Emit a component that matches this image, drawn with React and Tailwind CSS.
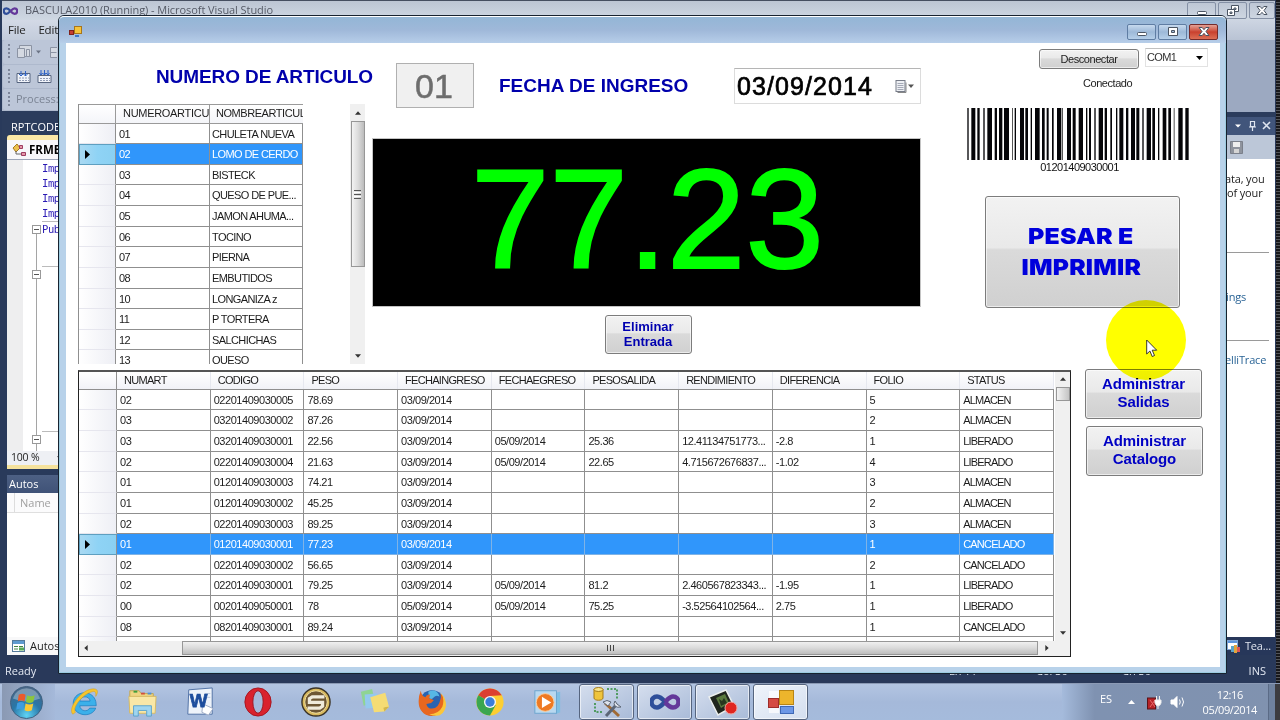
import React from 'react';
import clsx from 'clsx';

const articulos = [
    ['01', 'CHULETA NUEVA'],
    ['02', 'LOMO DE CERDO'],
    ['03', 'BISTECK'],
    ['04', 'QUESO DE PUE...'],
    ['05', 'JAMON AHUMA...'],
    ['06', 'TOCINO'],
    ['07', 'PIERNA'],
    ['08', 'EMBUTIDOS'],
    ['10', 'LONGANIZA z'],
    ['11', 'P TORTERA'],
    ['12', 'SALCHICHAS'],
    ['13', 'QUESO'],
];

const columnas = ['NUMART', 'CODIGO', 'PESO', 'FECHAINGRESO', 'FECHAEGRESO', 'PESOSALIDA', 'RENDIMIENTO', 'DIFERENCIA', 'FOLIO', 'STATUS'];

const entradas = [
    ['02', '02201409030005', '78.69', '03/09/2014', '', '', '', '', '5', 'ALMACEN'],
    ['03', '03201409030002', '87.26', '03/09/2014', '', '', '', '', '2', 'ALMACEN'],
    ['03', '03201409030001', '22.56', '03/09/2014', '05/09/2014', '25.36', '12.41134751773...', '-2.8', '1', 'LIBERADO'],
    ['02', '02201409030004', '21.63', '03/09/2014', '05/09/2014', '22.65', '4.715672676837...', '-1.02', '4', 'LIBERADO'],
    ['01', '01201409030003', '74.21', '03/09/2014', '', '', '', '', '3', 'ALMACEN'],
    ['01', '01201409030002', '45.25', '03/09/2014', '', '', '', '', '2', 'ALMACEN'],
    ['02', '02201409030003', '89.25', '03/09/2014', '', '', '', '', '3', 'ALMACEN'],
    ['01', '01201409030001', '77.23', '03/09/2014', '', '', '', '', '1', 'CANCELADO'],
    ['02', '02201409030002', '56.65', '03/09/2014', '', '', '', '', '2', 'CANCELADO'],
    ['02', '02201409030001', '79.25', '03/09/2014', '05/09/2014', '81.2', '2.460567823343...', '-1.95', '1', 'LIBERADO'],
    ['00', '00201409050001', '78', '05/09/2014', '05/09/2014', '75.25', '-3.52564102564...', '2.75', '1', 'LIBERADO'],
    ['08', '08201409030001', '89.24', '03/09/2014', '', '', '', '', '1', 'CANCELADO'],
    ['', '', '', '', '', '', '', '', '', ''],
];

// start and width of each bar, in thirds of a pixel
const barras = [
    [1, 4], [13, 12], [31, 7], [49, 4], [61, 14], [83, 7], [96, 10], [111, 15], [135, 3], [143, 4],
    [159, 12], [175, 8], [191, 4], [204, 14], [225, 8], [239, 6], [255, 5], [270, 13], [285, 3], [300, 12],
    [317, 9], [335, 13], [357, 4], [366, 6], [382, 4], [395, 13], [413, 7], [430, 5], [447, 4], [457, 12],
    [477, 7], [492, 12], [508, 9], [526, 4], [539, 13], [556, 8], [573, 4], [587, 11], [604, 8], [620, 3],
    [634, 13], [655, 10],
];

const flecha = {
    up: 'M0 4L3.5 0L7 4Z',
    down: 'M0 0L3.5 4L7 0Z',
    left: 'M4 0L0 3.5L4 7Z',
    right: 'M0 0L4 3.5L0 7Z',
};

function Arrow({ dir, className }) {
    return (
        <svg viewBox={dir === 'up' || dir === 'down' ? '0 0 7 4' : '0 0 4 7'} className={clsx('shrink-0', className)}>
            <path d={flecha[dir]} fill="#333" />
        </svg>
    );
}

function RowHead({ selected, className }) {
    return (
        <div className={clsx('shrink-0 flex items-center pl-[5px] border-r border-r-[#8f8f8f]', className,
            selected
                ? 'bg-linear-to-r from-[#a9d9f2] via-[#8fd3f5] to-[#8ad0f2] border border-[#5e9fc0]'
                : 'bg-linear-to-r from-white to-[#eeeff5] border-b border-b-[#e6e6ee]')}>
            {selected && <svg viewBox="0 0 5 9" className="w-[5px] h-[9px]"><path d="M0 0L5 4.5L0 9Z" fill="#000" /></svg>}
        </div>
    );
}

function WinButton({ className, children }) {
    return (
        <button className={clsx('flex flex-col items-center justify-center rounded-[3px] border border-[#7c7c7c] bg-[linear-gradient(#f2f2f2,#e9e9e9_46%,#dadada_48%,#d0d0d0)] shadow-[inset_0_0_0_1px_rgba(255,255,255,.6)] whitespace-nowrap', className)}>
            {children}
        </button>
    );
}

function CaptionButton({ kind, className }) {
    return (
        <div className={clsx('flex items-center justify-center rounded-[2px] border', className)}>
            <svg viewBox="0 0 14 12" className="w-[14px] h-[12px]" fill="#fff" stroke="#4b5563" strokeWidth="1">
                {kind === 'min' && <rect x="2.5" y="6.5" width="9" height="3" rx="1" />}
                {kind === 'max' && <path fillRule="evenodd" d="M2.5 1.5h9v8h-9zM5.5 4.5v2h3v-2z" />}
                {kind === 'restore' && <><path fillRule="evenodd" d="M5.5 .5h7v6h-7zM8 3v1.500h2V3z" /><path fillRule="evenodd" d="M1.500 4.500h7v6h-7zM4 7v1.500h2V7z" /></>}
                {kind === 'close' && <path d="M2 1.500h3.200L7 3.700l1.800-2.200H12L9 5.500l3 4H8.800L7 7.300 5.200 9.500H2l3-4z" />}
            </svg>
        </div>
    );
}

function ArticulosGrid() {
    return (
        <div className="flex h-[260px] w-[287px] text-[11px] tracking-[-0.600px] text-[#1c1c1c] overflow-hidden whitespace-nowrap">
            <div className="w-[225px] border-l border-[#8f8f8f] overflow-hidden">
                <div className="flex h-[19.500px] border-t border-b border-[#9a9a9a] bg-linear-to-b from-white to-[#f4f5f9]">
                    <div className="w-[37px] border-r border-[#9a9a9a] shrink-0" />
                    <div className="w-[94px] shrink-0 border-r border-[#9a9a9a] pl-[7px] leading-[17px] overflow-hidden tracking-[-0.300px]">NUMEROARTICULO</div>
                    <div className="grow pl-[6px] leading-[17px] overflow-hidden tracking-[-0.450px]">NOMBREARTICULO</div>
                </div>
                {articulos.map(([num, nombre], i) => (
                    <div key={num} className="flex h-[20.630px]">
                        <RowHead selected={i === 1} className="w-[37px]" />
                        <div className={clsx('w-[94px] shrink-0 border-r border-b border-[#8f8f8f] pl-[3px] leading-[20px]', i === 1 && 'bg-[#3096fb] text-white')}>{num}</div>
                        <div className={clsx('grow border-r border-b border-[#8f8f8f] pl-[2px] leading-[20px]', i === 1 && 'bg-[#3096fb] text-white')}>{nombre}</div>
                    </div>
                ))}
            </div>
            <div className="ml-auto flex w-[15px] flex-col items-center bg-[#f0f0f0]">
                <div className="flex h-[17px] items-center"><Arrow dir="up" className="w-[6px] h-[4px]" /></div>
                <div className="flex w-[14px] h-[146px] flex-col items-center justify-center gap-px border border-[#979797] bg-linear-to-r from-[#f3f3f3] via-[#dcdcdc] to-[#bcbcbc]">
                    <i className="h-px w-[7px] bg-[#555]" />
                    <i className="h-px w-[7px] bg-white" />
                    <i className="h-px w-[7px] bg-[#555]" />
                    <i className="h-px w-[7px] bg-white" />
                    <i className="h-px w-[7px] bg-[#555]" />
                </div>
                <div className="mt-auto flex h-[16px] items-center"><Arrow dir="down" className="w-[6px] h-[4px]" /></div>
            </div>
        </div>
    );
}

function EntradasGrid() {
    return (
        <div className="flex h-[287px] w-[993px] shrink-0 flex-col border border-[#222] border-t-2 border-t-[#555] text-[11px] tracking-[-0.45px] text-[#1c1c1c] whitespace-nowrap">
            <div className="flex h-[269px]">
                <div className="w-[976px] overflow-hidden">
                    <div className="flex h-[18.200px] w-[975px] border-b border-[#8f8f8f] bg-linear-to-b from-white to-[#f1f2f7]">
                        <div className="w-[38px] shrink-0 border-r border-[#8f8f8f]" />
                        {columnas.map((c) => (
                            <div key={c} className="w-[93.700px] shrink-0 border-r border-[#e6e8ef] pl-[7px] leading-[17px] tracking-[-0.700px]">{c}</div>
                        ))}
                    </div>
                    {entradas.map((fila, i) => (
                        <div key={i} className="flex h-[20.650px] w-[975px]">
                            <RowHead selected={i === 7} className="w-[38px]" />
                            {fila.map((v, j) => (
                                <div key={j} className={clsx('w-[93.700px] shrink-0 border-r border-b pl-[3px] leading-[20px]', j === 9 && 'tracking-[-0.800px]', i === 7 ? 'bg-[#3096fb] text-white border-[#7fb3e6]' : 'border-[#8f8f8f]')}>{v}</div>
                            ))}
                        </div>
                    ))}
                </div>
                <div className="flex w-[15px] flex-col items-center bg-[#f0f0f0]">
                    <div className="flex h-[15px] items-center"><Arrow dir="up" className="w-[6px] h-[4px]" /></div>
                    <div className="w-[14px] h-[14px] border border-[#979797] bg-linear-to-r from-[#f3f3f3] to-[#c4c4c4]" />
                    <div className="mt-auto flex h-[15px] items-center"><Arrow dir="down" className="w-[6px] h-[4px]" /></div>
                </div>
            </div>
            <div className="flex grow items-center bg-[#f0f0f0]">
                <div className="flex w-[103px] pl-[5px]"><Arrow dir="left" className="w-[4px] h-[6px]" /></div>
                <div className="flex h-[14px] w-[856px] items-center justify-center gap-[2px] border border-[#979797] bg-linear-to-b from-[#f0f0f0] via-[#dadada] to-[#bdbdbd]">
                    <i className="h-[6px] w-px bg-[#444]" />
                    <i className="h-[6px] w-px bg-[#444]" />
                    <i className="h-[6px] w-px bg-[#444]" />
                </div>
                <Arrow dir="right" className="ml-[7px] w-[4px] h-[6px]" />
            </div>
        </div>
    );
}

function FormIcon({ className }) {
    return (
        <svg viewBox="0 0 26 24" className={className}>
            <rect x="1" y="1" width="10" height="22" fill="#fff" opacity=".7" />
            <rect x="11.500" y=".5" width="14" height="14" fill="#edb52c" stroke="#b98514" />
            <rect x=".5" y="8.500" width="10" height="9" fill="#d44a42" stroke="#9d2d2a" />
            <rect x="12.500" y="16.500" width="13" height="7" fill="#6c97e6" stroke="#3f68b5" />
        </svg>
    );
}

function TitleIcon({ className }) {
    return (
        <svg viewBox="0 0 13 12" className={className}>
            <rect x="5.500" y=".5" width="7" height="7" fill="#f6c43a" stroke="#a8761a" />
            <rect x=".5" y="4.500" width="4" height="4" fill="#c43d30" stroke="#7f211c" />
            <path d="M6 10h4" stroke="#3f78c8" strokeWidth="2" />
        </svg>
    );
}

function Infinity({ className }) {
    return (
        <svg viewBox="0 0 30 16" className={className} fill="none" strokeWidth="4.500">
            <path d="M15 8C11 3 9 2.500 7 2.500a5.300 5.300 0 0 0 0 11C10 13.500 12 11 15 8" stroke="#2f4f9a" />
            <path d="M15 8C18 5 20 2.500 23 2.500a5.300 5.300 0 0 1 0 11C21 13.500 19 13 15 8" stroke="#64389a" />
        </svg>
    );
}

function BasculaWindow() {
    return (
        <div className="absolute left-[58px] top-[15px] flex h-[659px] w-[1169px] flex-col rounded-t-[6px] border border-[#17222f] bg-[#b8d2ea] pl-[7px] pr-[6px] pb-[6px] shadow-[inset_0_0_0_1px_#9ccbe0]">
            <div className="-ml-[7px] -mr-[6px] flex h-[27px] shrink-0 items-start rounded-t-[5px] border-t border-white bg-linear-to-b from-[#93b6d6] via-[#9fb8d9] to-[#b7cee9] pl-[10px] pr-[8px]">
                <TitleIcon className="mt-[9px] h-[12px] w-[13px]" />
                <div className="ml-auto mt-[7px] flex gap-[2px]">
                    <CaptionButton kind="min" className="h-[16px] w-[29px] border-[#5f7da3] bg-linear-to-b from-[#c6d9ee] via-[#9db9d8] to-[#b5cfe9]" />
                    <CaptionButton kind="max" className="h-[16px] w-[29px] border-[#5f7da3] bg-linear-to-b from-[#c6d9ee] via-[#9db9d8] to-[#b5cfe9]" />
                    <CaptionButton kind="close" className="h-[16px] w-[29px] border-[#742b2b] bg-linear-to-b from-[#e3a196] via-[#c9402e] to-[#dc6e55]" />
                </div>
            </div>
            <div className="flex grow flex-col bg-white pl-[12px]">
                <div className="flex h-[326.500px] shrink-0">
                    <div className="flex w-[294px] flex-col">
                        <h1 className="h-[61px] pl-[78px] pt-[22px] text-[19px] leading-[24px] tracking-[-0.100px] font-bold text-[#0000ac] whitespace-nowrap"><span className="block scale-y-[.94]">NUMERO DE ARTICULO</span></h1>
                        <ArticulosGrid />
                    </div>
                    <div className="flex w-[549px] shrink-0 flex-col items-center pt-[20px]">
                        <div className="flex h-[75px] w-full items-start pl-[24px]">
                            <div className="flex h-[45px] w-[78px] items-center justify-center border border-[#b0b0b0] bg-[#f0f0f0] pr-[2px] text-[34px] leading-none text-[#6d6d6d] [-webkit-text-stroke:0.500px_#6d6d6d]">01</div>
                            <h1 className="ml-[25px] mt-[11px] text-[19px] leading-[24px] font-bold text-[#0000ac] whitespace-nowrap"><span className="block scale-y-[.94]">FECHA DE INGRESO</span></h1>
                            <div className="ml-auto mt-[5px] flex h-[36px] w-[187px] items-center border border-[#dcdcdc] border-t-[#b5b5b5] bg-white pl-[2px] pr-[5px]">
                                <span className="text-[25px] tracking-[1.100px] leading-none text-black [-webkit-text-stroke:0.700px_#000]">03/09/2014</span>
                                <svg viewBox="0 0 20 13" className="ml-auto h-[13px] w-[20px]">
                                    <path d="M2.500 12.500h8.500V2.500" fill="none" stroke="#888" />
                                    <rect x="1" y=".5" width="9" height="11" fill="#eef0f4" stroke="#777c88" />
                                    <path d="M2.500 3.500h6M2.500 5.500h6M2.500 7.500h6M2.500 9.500h6" stroke="#a4a9b6" />
                                    <path d="M13 4.500h6l-3 3.500z" fill="#555" />
                                </svg>
                            </div>
                        </div>
                        <div className="flex h-[169px] w-full shrink-0 items-center justify-center border border-[#c4c4c4] bg-black pb-[6px] pl-[2px] text-[141px] leading-none text-[#00ff00] [-webkit-text-stroke:2px_#00ff00]">
                            77.23
                        </div>
                        <WinButton className="ml-[4px] mt-[8px] h-[39px] w-[87px] text-[13px] leading-[15px] font-bold text-[#0000b0] pb-[2px]">
                            <span className="-ml-[1px]">Eliminar</span>
                            <span className="-ml-[1px]">Entrada</span>
                        </WinButton>
                    </div>
                    <div className="flex w-[299px] flex-col">
                        <div className="mt-[4px] flex pl-[118px] text-[11px]">
                            <WinButton className="mt-[2px] h-[20px] w-[100px] tracking-[-0.450px] text-[#222]">
                                <span>Desconectar</span>
                            </WinButton>
                            <div className="ml-[6px] mt-px flex h-[19px] w-[63px] items-center border border-[#e2e2e2] border-t-[#c0c0c0] pl-px pr-[4px] text-[#333]">
                                <span className="grow tracking-[-0.600px] -mt-px">COM1</span>
                                <svg viewBox="0 0 7 4" className="h-[4px] w-[7px]"><path d="M0 0h7L3.500 4z" /></svg>
                            </div>
                        </div>
                        <div className="mt-[6px] pl-[162px] text-[11px] leading-[16px] tracking-[-0.450px] text-[#222]">Conectado</div>
                        <svg viewBox="0 0 669 156" preserveAspectRatio="none" className="ml-[46px] mt-[17px] h-[52px] w-[223px] shrink-0">
                            {barras.map(([x, w]) => <rect key={x} x={x} y="0" width={w} height="156" fill={w < 4 ? '#555' : '#050508'} />)}
                        </svg>
                        <div className="ml-[46px] w-[225px] text-center text-[11px] leading-[15px] tracking-[-0.500px] text-[#111]">01201409030001</div>
                        <WinButton className="ml-[64px] mt-[21px] h-[112px] w-[195px] pr-[3px] font-[Inter] text-[22px] leading-[31px] font-black text-[#0000dc]">
                            <span className="scale-x-[1.130] tracking-[0.200px]">PESAR E</span>
                            <span className="scale-x-[1.120] tracking-[0.200px]">IMPRIMIR</span>
                        </WinButton>
                    </div>
                </div>
                <div className="flex items-start">
                    <EntradasGrid />
                    <div className="flex flex-col gap-[7px] pl-[14px] -mt-px">
                        <WinButton className="h-[50px] w-[117px] text-[15px] leading-[18px] font-bold text-[#0000c4] pb-px tracking-[-0.100px]">
                            <span>Administrar</span>
                            <span>Salidas</span>
                        </WinButton>
                        <WinButton className="ml-px h-[50px] w-[117px] text-[15px] leading-[18px] font-bold text-[#0000c4] pb-px tracking-[-0.100px]">
                            <span>Administrar</span>
                            <span>Catalogo</span>
                        </WinButton>
                    </div>
                </div>
            </div>
        </div>
    );
}

const grip = 'mx-[5px] h-[16px] w-[2px] bg-[repeating-linear-gradient(#7d869a_0_2px,transparent_2px_4px)]';

function Collapse() {
    return <div className="flex h-[9px] w-[9px] shrink-0 items-center justify-center border border-[#999] bg-white"><i className="h-px w-[5px] bg-[#555]" /></div>;
}

function StudioLeft() {
    return (
        <div className="flex w-[59px] flex-col overflow-hidden whitespace-nowrap">
            <div className="flex h-[20px] items-center gap-[13px] bg-linear-to-b from-[#d3d9e6] to-[#c3ccdb] pl-[6px] text-[11.500px] tracking-[-0.200px] text-[#222] shrink-0"><span>File</span><span>Edit</span></div>
            <div className="flex h-[71px] shrink-0 flex-col bg-[#aeb9cd]">
                <div className="mx-px flex h-[24px] items-center rounded-[2px] bg-[#bcc6d8]">
                    <i className={grip} />
                    <svg viewBox="0 0 42 16" className="h-[16px] w-[42px] shrink-0" fill="#d4d9e2" stroke="#8b93a3">
                        <path d="M4.500 1.500h12v11h-12z" /><path d="M2.500 4.500h7v9h-7zM11.500 5.500h3v7h-3z" />
                        <path d="M21 6.500h5l-2.500 3z" fill="#6b7485" stroke="none" />
                        <path d="M35.500 3.500h9v10h-9zM35.500 8.500h6" />
                    </svg>
                </div>
                <div className="mx-px mt-px flex h-[23px] items-center rounded-[2px] bg-[#bcc6d8]">
                    <i className={grip} />
                    <svg viewBox="0 0 42 16" className="h-[16px] w-[42px] shrink-0" fill="none">
                        <path d="M2 4.500h13v9H2zM23 6.500h13v7H23z" fill="#f1f4fa" stroke="#56647f" />
                        <path d="M4 9h10M4 11.500h10M25 9.500h10M25 11.500h10" stroke="#8f9bb4" strokeDasharray="2 1" />
                        <path d="M6 2v5M10.500 2v5M26 1v5M29.500 1v5M33 1v5M4 5l2 2 2-2M8.500 5l2 2 2-2M24.500 4l1.500 2 1.500-2 2 2 1.500-2 2 2 1.500-2" stroke="#2e62c5" />
                    </svg>
                </div>
                <div className="mx-px mt-px flex h-[21px] items-center rounded-[2px] bg-[#bcc6d8] text-[11px] text-[#7b8494]"><i className={grip} /><span className="pl-px">Process:</span></div>
            </div>
            <div className="flex h-[29px] shrink-0 flex-col bg-[#2b3c5c] pl-[5px]">
                <div className="mt-[7px] h-[17px] pl-[4px] text-[11px] leading-[18px] text-white">RPTCODE</div>
                <div className="h-[5px] rounded-tl-[3px] bg-[#fbe8a6]" />
            </div>
            <div className="ml-[5px] flex h-[20px] shrink-0 items-center gap-[2px] border-b border-[#9ca5b8] bg-[#f7f7fa] pl-[5px] text-[11.500px] font-bold text-black">
                <svg viewBox="0 0 15 14" className="h-[14px] w-[15px] shrink-0">
                    <path d="M1 5l4-4 3 4-4 4z" fill="#edc14c" stroke="#a67b20" />
                    <path d="M7.500 2.500h3v3h-3zM9.500 9.500h4v3h-4z" fill="#e596a8" stroke="#9c3c60" /><path d="M4 8v3h5" fill="none" stroke="#666" />
                </svg>
                FRMENTRADA
            </div>
            <div className="ml-[5px] flex h-[291px] shrink-0 bg-white">
                <div className="w-[16px] shrink-0 bg-[#eeeeef]" />
                <div className="flex w-[18px] shrink-0 flex-col items-end pt-[65px]">
                    <Collapse />
                    <div className="mr-[4px] h-[36px] w-px bg-[#a5a5a5]" />
                    <Collapse />
                    <div className="mr-[4px] h-[156px] w-px bg-[#a5a5a5]" />
                    <Collapse />
                    <div className="mr-[4px] h-[7px] w-px bg-[#a5a5a5]" />
                </div>
                <div className="ml-px flex w-[17px] flex-col overflow-hidden font-['DejaVu_Sans_Mono','Liberation_Mono',monospace] text-[10.500px] leading-[15px] text-[#2b1bb4] tracking-[-0.400px]">
                    <span className="mt-px">Imports</span><span>Imports</span><span>Imports</span><span>Imports</span>
                    <span className="border-t border-[#bbb] leading-[14px]">Public</span>
                    <i className="mt-[30px] h-px shrink-0 bg-[#bbb]" />
                    <i className="mt-[164px] h-px shrink-0 bg-[#bbb]" />
                </div>
            </div>
            <div className="ml-[5px] flex h-[14px] shrink-0 items-center justify-between bg-[#eef0f4] pl-[4px] text-[10.500px] tracking-[-0.200px] text-[#222]">100 %<Arrow dir="down" className="-mr-[2px] w-[6px] h-[4px]" /></div>
            <div className="ml-[5px] h-[4px] shrink-0 bg-[#f5e29c]" />
            <div className="ml-[5px] mt-[6px] h-[18px] shrink-0 bg-linear-to-b from-[#4d6084] to-[#3f5277] pl-[2px] text-[11px] leading-[18px] text-white">Autos</div>
            <div className="ml-[5px] flex h-[20px] shrink-0 border-b border-[#dfdfdf] bg-[#fbfbfc]"><div className="w-[8px] border-r border-[#ddd]" /><span className="pl-[5px] text-[11px] leading-[19px] text-[#a0a0a0]">Name</span></div>
            <div className="ml-[5px] h-[124px] shrink-0 bg-white" />
            <div className="ml-[5px] flex h-[18px] shrink-0 items-center gap-[5px] bg-[#f8f8f9] pl-[5px] text-[11px] text-[#222]">
                <svg viewBox="0 0 13 12" className="h-[12px] w-[13px] shrink-0"><rect x=".5" y=".5" width="12" height="11" fill="#fff" stroke="#557a9b" /><rect x="1" y="1" width="11" height="3" fill="#5f9bd0" /><path d="M2 6.500h4M2 9h4M7 6.500h4" stroke="#468344" /><rect x="7" y="7.500" width="5" height="3" fill="#58ab56" /></svg>
                Autos
            </div>
        </div>
    );
}

function StudioRight() {
    return (
        <div className="ml-auto flex w-[54px] flex-col overflow-hidden whitespace-nowrap text-[11.500px]">
            <div className="h-[20px] shrink-0 bg-linear-to-b from-[#cdd5e2] to-[#b9c3d4]" />
            <div className="h-[72px] shrink-0 bg-[#9ca9c1]" />
            <div className="h-[5px] shrink-0 bg-[#2b3c5c]" />
            <div className="flex h-[18px] shrink-0 items-center justify-end gap-[7px] bg-[#41557b] pr-[4px]">
                <svg viewBox="0 0 36 12" className="h-[12px] w-[36px]" fill="none" stroke="#dfe5f0" strokeWidth="1.200">
                    <path d="M0 4.500h6l-3 3z" fill="#fff" stroke="none" /><path d="M15.500 1.500h4v5h-4zM14 7h7M17.500 7v4" /><path d="M28 2l7 7M35 2l-7 7" strokeWidth="1.600" />
                </svg>
            </div>
            <div className="flex h-[24px] shrink-0 items-center bg-[#bcc7d8] pl-[9px]">
                <svg viewBox="0 0 13 13" className="h-[13px] w-[13px]"><path d="M.5 .5h12v12H.5z" fill="#8f949e" stroke="#7b808b" /><rect x="3" y="1" width="7" height="5" fill="#eee" /><rect x="4" y="8" width="5" height="4" fill="#d5d5d5" /></svg>
            </div>
            <div className="flex h-[478px] shrink-0 flex-col bg-white pl-[5px] pt-[13px] text-[11px] leading-[14px] tracking-[-0.150px] text-[#222]">
                <span className="-ml-px">ata, you</span>
                <span className="pl-px">of your</span>
                <i className="mr-[6px] mt-[52px] h-px bg-[#9a9a9a]" />
                <span className="mt-[37px] text-[#2a6496]">ings</span>
                <i className="mr-[6px] mt-[36px] h-px bg-[#9a9a9a]" />
                <span className="-ml-px mt-[12px] text-[#2a6496]">elliTrace</span>
            </div>
            <div className="flex h-[18px] shrink-0 items-center gap-[5px] bg-[#27375a] pl-[6px] text-[11px] tracking-[-0.200px] text-[#dfe4ee]">
                <svg viewBox="0 0 13 13" className="h-[13px] w-[13px]"><rect x=".5" y=".5" width="10" height="9" fill="#fff" stroke="#7fa4d4" /><path d="M1 2h9" stroke="#5c94dd" strokeWidth="2" /><rect x="4" y="6" width="3" height="6" fill="#5ba4c8" /><rect x="7" y="5" width="3" height="8" fill="#e0a43c" /><rect x="10" y="7" width="3" height="5" fill="#d55" /></svg>
                Tea...
            </div>
        </div>
    );
}

function StudioWindow() {
    return (
        <div className="flex h-[683px] flex-col bg-[#293a5b] pl-[2px] pr-[5px] font-['Open_Sans','Noto_Sans',sans-serif]">
            <div className="flex h-[20px] shrink-0 items-center border-t border-[#454e60] bg-linear-to-b from-[#bcc5d3] to-[#cfd8e3] pl-px">
                <Infinity className="h-[8px] w-[15px]" />
                <span className="-mt-px pl-[7px] text-[11px] tracking-[-0.070px] text-[#555a66]">BASCULA2010 (Running) - Microsoft Visual Studio</span>
                <div className="ml-auto flex gap-[2px]">
                    <CaptionButton kind="min" className="h-[17px] w-[29px] border-[#8490a5]" />
                    <CaptionButton kind="restore" className="h-[17px] w-[29px] border-[#8490a5]" />
                    <CaptionButton kind="close" className="h-[17px] w-[26px] border-[#8490a5]" />
                </div>
            </div>
            <div className="flex h-[635px]">
                <StudioLeft />
                <StudioRight />
            </div>
            <div className="flex grow items-center bg-[#29395a] pr-[9px] pt-[5px] text-[11px] text-[#e3e8f2]">
                <span className="w-[947px] pl-[3px]">Ready</span>
                <span className="w-[87px]">Ln 11</span>
                <span className="w-[86px]">Col 30</span>
                <span>Ch 30</span>
                <span className="ml-auto">INS</span>
            </div>
        </div>
    );
}

function TaskIcon({ children }) {
    return (
        <div className="flex w-[58px] shrink-0 items-center justify-center">
            <svg viewBox="0 0 32 32" className="h-[30px] w-[30px]">{children}</svg>
        </div>
    );
}

function TaskButton({ children, active }) {
    return (
        <div className={clsx('flex h-full w-[55px] items-center justify-center rounded-[3px] border border-[#56657f] shadow-[inset_0_0_0_1px_rgba(255,255,255,.6)]', active ? 'bg-linear-to-br from-[#f0f4fb] to-[#d3deef]' : 'bg-linear-to-br from-[#d5deee] to-[#a9bbd8]')}>
            {children}
        </div>
    );
}

function Taskbar() {
    return (
        <div className="flex h-[37px] border-t border-[#8b9ab5] bg-linear-to-b from-[#b3c5e2] via-[#a5b9da] to-[#a5bbdc] pl-[2px]">
            <div className="flex w-[53px] shrink-0 items-center justify-center bg-linear-to-r from-[#8a99b3] to-[#a5b9da] pr-[4px]">
                <svg viewBox="0 0 36 36" className="h-[35px] w-[35px]">
                    <defs>
                        <radialGradient id="orb" cx=".5" cy=".9" r=".9"><stop offset="0" stopColor="#5fd4f5" /><stop offset=".5" stopColor="#2877a8" /><stop offset="1" stopColor="#4b6585" /></radialGradient>
                    </defs>
                    <circle cx="18" cy="18" r="16.500" fill="url(#orb)" stroke="#41607f" />
                    <path d="M4 14a14.500 14.500 0 0 1 28 0Q18 20 4 14z" fill="#fff" opacity=".3" />
                    <path d="M10 10q4-2 7 0l-1 7q-3-2-7 0z" fill="#ea5b2c" />
                    <path d="M18.500 10.500q4 2 8 0l-1.500 7q-4 2-7.500 0z" fill="#8cc63e" />
                    <path d="M8.500 18.500q4-2 7 0l-1 7q-3-2-7 0z" fill="#3f9de0" />
                    <path d="M17 19q4 2 8 0l-1.500 7q-4 2-7.500 0z" fill="#fbc934" />
                </svg>
            </div>
            <TaskIcon>
                <path d="M29 20H11.500c.5 6 8.500 7 10.500 2.500h6.500c-4 11-24 9-24-5 0-15 25-16 24.500 2.500zM11.500 15h11c-.5-6-10.500-6-11 0z" fill="#3bb0ea" stroke="#1d7fc0" strokeWidth=".8" />
                <path d="M4 29C-2 23 14 1 27 2c5 .5 3.500 5 1.500 8 .5-4-.5-6-3.500-5C15 7 3 22 7 27z" fill="#f6c52e" stroke="#d29a17" strokeWidth=".5" />
            </TaskIcon>
            <TaskIcon>
                <path d="M3 4h10l2 3h13v20H3z" fill="#efd583" stroke="#c3a550" />
                <rect x="7" y="4" width="4" height="2" fill="#3c9e3c" /><rect x="15" y="6" width="4" height="2" fill="#d34f3a" /><rect x="22" y="6" width="4" height="2" fill="#4c8fd5" />
                <path d="M2 10h29l-1 18H3z" fill="#f9e7a7" stroke="#d5ba63" />
                <path d="M7 31V20h19v11h-5v-6h-9v6z" fill="#9fd5f0" stroke="#5aa2cd" />
            </TaskIcon>
            <TaskIcon>
                <path d="M4 3l25-2v28H3z" fill="#eef3fa" stroke="#4e6fa3" />
                <path d="M21 7h6M23 11h4M20 22h8" stroke="#b7c5db" />
                <path d="M19 18l11 5-5 7-7-3z" fill="#fff" stroke="#9caac4" />
                <text x="5" y="21" fontFamily="Liberation Sans" fontWeight="bold" fontSize="20" fill="#1d4d9d" stroke="#1d4d9d" strokeWidth=".8">W</text>
            </TaskIcon>
            <TaskIcon>
                <ellipse cx="16" cy="16" rx="14" ry="15" fill="#d9232e" stroke="#a5141f" />
                <ellipse cx="16" cy="16" rx="5.500" ry="12" fill="#a5b9da" stroke="#9c1620" />
            </TaskIcon>
            <TaskIcon>
                <circle cx="16" cy="16" r="15" fill="#d9b95e" stroke="#3a3328" strokeWidth="1.500" />
                <circle cx="16" cy="16" r="12" fill="#6d5634" stroke="#f8e6a6" />
                <path d="M25 10.500H12l-3 2v4h14v4l-3 2H7" fill="none" stroke="#efeadb" strokeWidth="3.500" />
            </TaskIcon>
            <TaskIcon>
                <path d="M2 5l12-3 3 14-12 4z" fill="#8fd493" /><path d="M6 8l13-1v15L7 23z" fill="#94c9ee" /><path d="M12 11l16-5 4 15q-3 3-5 5l-11 1z" fill="#f5dc74" /><path d="M32 21q-4 0-6 1l1 4z" fill="#d3b74e" />
            </TaskIcon>
            <TaskIcon>
                <circle cx="16" cy="17" r="13.500" fill="#2a63b0" /><path d="M12 5q9-4 12 5-4-2-6 1t-5 1z" fill="#57b7e5" />
                <path d="M4 4q-3 7-2 15C5 35 26 35 29 19q1-8-4-12 1 4 0 6-2 10-9 10-5 0-6-5l5-1 3-3-5-2 1-4q-4 0-5 3Q5 10 4 4z" fill="#e8671f" />
                <path d="M25 6q5 6 2 15-4 8-14 8 15 6 18-9 0-9-6-14z" fill="#fbc63a" />
            </TaskIcon>
            <TaskIcon>
                <circle cx="16" cy="16" r="14.500" fill="#fcce33" />
                <path d="M16 16L3.500 8.800A14.500 14.500 0 0 1 28.500 8.800L16 9.500z" fill="#dc3f31" />
                <path d="M3.500 8.800A14.500 14.500 0 0 0 16 30.500l6-11L16 16z" fill="#3aa650" />
                <circle cx="16" cy="16" r="6.500" fill="#f5f5f5" /><circle cx="16" cy="16" r="5" fill="#3a7ddb" />
            </TaskIcon>
            <TaskIcon>
                <path d="M24 6l5-1v22l-5 2z" fill="#7fbfe4" /><rect x="2" y="4" width="23" height="24" fill="#b8d8f0" stroke="#6ba4cd" />
                <circle cx="13" cy="16.500" r="9.500" fill="#ee7a24" stroke="#fbd0a1" /><path d="M9.500 10.500v12l10-6z" fill="#fff" />
            </TaskIcon>
            <div className="ml-[2px] flex gap-[3px]">
                <TaskButton>
                    <svg viewBox="0 0 32 32" className="h-[32px] w-[32px]">
                        <path d="M3 3v9c0 3 9 3 9 0V3" fill="#efc43c" stroke="#a67b16" /><ellipse cx="7.500" cy="3.500" rx="4.500" ry="2" fill="#fae68e" stroke="#a67b16" />
                        <path d="M16 3h10v10M4 17v9h8" fill="none" stroke="#2c8a37" strokeWidth="1.500" strokeDasharray="2 1.500" />
                        <path d="M14 17l14 13" stroke="#a06a35" strokeWidth="3" /><path d="M26 18L15 30" stroke="#5c6676" strokeWidth="3" /><path d="M12 16l5 4 3-4q-4-3-8 0zM24 15q-2 3 0 5t6 1l-4-3z" fill="#dfe4ec" stroke="#5c6676" />
                    </svg>
                </TaskButton>
                <TaskButton><Infinity className="h-[16px] w-[30px]" /></TaskButton>
                <TaskButton>
                    <svg viewBox="0 0 32 32" className="h-[32px] w-[32px]">
                        <path d="M2 11L19 4l8 16-16 9z" fill="#20261f" stroke="#ecefee" strokeWidth="1.500" /><path d="M9 12l9-4 4 9-8 5z" fill="#5a7a3f" /><path d="M12 13l3 2 2-3 3 5-6 3z" fill="#26361f" />
                        <circle cx="24" cy="22" r="6" fill="#e02620" stroke="#f2a39f" />
                    </svg>
                </TaskButton>
                <TaskButton active><FormIcon className="h-[24px] w-[26px]" /></TaskButton>
            </div>
            <div className="ml-auto flex w-[218px] items-center bg-linear-to-r from-[#a5bbdc] via-[#7f92b1] via-15% to-[#8092af] font-['Open_Sans','Noto_Sans',sans-serif] text-[11px] text-white">
                <span className="w-[28px] pl-[38px] box-content -mt-[5px]">ES</span>
                <svg viewBox="0 0 7 4" className="h-[4px] w-[7px]"><path d="M0 4L3.500 0 7 4z" fill="#fff" /></svg>
                <svg viewBox="0 0 15 15" className="ml-[12px] h-[15px] w-[15px]"><rect x=".5" y="3" width="8" height="11" fill="#b62328" stroke="#5c1216" /><path d="M3 5l5 7M8 5l-5 7" stroke="#e9696b" /><path d="M8 5h6v3q-1 3-3 3T8 8zM9.500 1v4M12.500 1v4M11 11v3" fill="#fff" stroke="#eee" /></svg>
                <svg viewBox="0 0 15 14" className="ml-[8px] h-[14px] w-[15px]" fill="none" stroke="#fff"><path d="M1 5h2.500L7 1.500v11L3.500 9H1z" fill="#fff" /><path d="M9.500 4.500q1.500 2.500 0 5M12 2.500q3 4.500 0 9" /></svg>
                <div className="ml-auto mr-[11px] flex flex-col items-center leading-[15.500px] tracking-[-0.400px]"><span>12:16</span><span>05/09/2014</span></div>
                <div className="h-full w-[7px] border-l border-[#5b6b86] bg-[#6f829f]" />
                <div className="h-full w-[5px] bg-[#3c3c40]" />
            </div>
        </div>
    );
}

export default function App() {
    return (
        <div className="relative h-[720px] w-[1280px] overflow-hidden bg-[#1b1c20] font-['Liberation_Sans',Arial,sans-serif] select-none">
            <StudioWindow />
            <Taskbar />
            <BasculaWindow />
            <div className="absolute right-0 top-0 h-[683px] w-[4px] bg-[repeating-linear-gradient(#18181b_0_2px,#55565a_2px_3px)]" />
            <div className="absolute left-[1106px] top-[300px] h-[80px] w-[80px] rounded-full bg-[#ffff00] mix-blend-multiply" />
            <svg viewBox="0 0 12 19" className="absolute left-[1146px] top-[339px] h-[19px] w-[12px]">
                <path d="M.7 1v14l3.200-3 2.300 5.500 2.300-1-2.300-5.300h4.500z" fill="#fff" stroke="#222" strokeWidth=".9" />
            </svg>
        </div>
    );
}
